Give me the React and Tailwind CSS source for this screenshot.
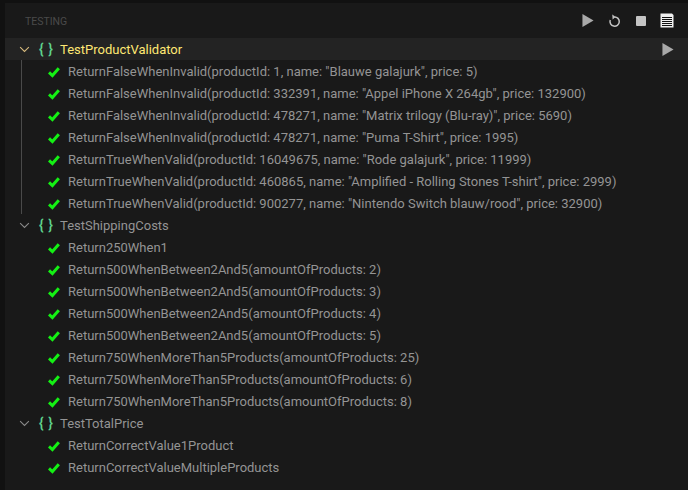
const suites = [
  {
    name: "TestProductValidator",
    active: true,
    tests: [
      'ReturnFalseWhenInvalid(productId: 1, name: "Blauwe galajurk", price: 5)',
      'ReturnFalseWhenInvalid(productId: 332391, name: "Appel iPhone X 264gb", price: 132900)',
      'ReturnFalseWhenInvalid(productId: 478271, name: "Matrix trilogy (Blu-ray)", price: 5690)',
      'ReturnFalseWhenInvalid(productId: 478271, name: "Puma T-Shirt", price: 1995)',
      'ReturnTrueWhenValid(productId: 16049675, name: "Rode galajurk", price: 11999)',
      'ReturnTrueWhenValid(productId: 460865, name: "Amplified - Rolling Stones T-shirt", price: 2999)',
      'ReturnTrueWhenValid(productId: 900277, name: "Nintendo Switch blauw/rood", price: 32900)',
    ],
  },
  {
    name: "TestShippingCosts",
    tests: [
      "Return250When1",
      "Return500WhenBetween2And5(amountOfProducts: 2)",
      "Return500WhenBetween2And5(amountOfProducts: 3)",
      "Return500WhenBetween2And5(amountOfProducts: 4)",
      "Return500WhenBetween2And5(amountOfProducts: 5)",
      "Return750WhenMoreThan5Products(amountOfProducts: 25)",
      "Return750WhenMoreThan5Products(amountOfProducts: 6)",
      "Return750WhenMoreThan5Products(amountOfProducts: 8)",
    ],
  },
  {
    name: "TestTotalPrice",
    tests: ["ReturnCorrectValue1Product", "ReturnCorrectValueMultipleProducts"],
  },
];

const Play = ({ className }) => (
  <svg viewBox="0 0 12 14" className={className} fill="#a9a9a9">
    <path d="M0 0L12 7L0 14Z" />
  </svg>
);

const Check = () => (
  <svg viewBox="0 0 12 11" className="w-[12px] h-[11px] shrink-0 mt-[2px]">
    <path d="M1 5.4L4.4 8.6L10.8 1.2" fill="none" stroke="#14f014" strokeWidth="3" />
  </svg>
);

const Chevron = ({ active }) => (
  <svg viewBox="0 0 12 8" className="w-[11px] h-[7px] shrink-0">
    <path d="M1 1.2L6 6.2L11 1.2" fill="none" stroke={active ? "#d7ba7d" : "#8a8a8a"} strokeWidth="1.2" />
  </svg>
);

const Suite = ({ suite }) => (
  <div>
    <div className={`flex items-center h-[22px] pl-[14px] ${suite.active ? "bg-[#232323]" : ""}`}>
      <Chevron active={suite.active} />
      <span className="ml-[9px] w-[14px] flex justify-between text-[14px] font-semibold text-[#5fd38d]">
        <span>{"{"}</span>
        <span>{"}"}</span>
      </span>
      <span className={`ml-[7px] mt-[2px] ${suite.active ? "text-[#ffe873]" : "text-[#949494]"}`}>{suite.name}</span>
      {suite.active && <Play className="w-[12px] h-[13px] ml-auto mr-[14px]" />}
    </div>
    <div className={suite.active ? "border-l border-[#4a4a4a] ml-[16px]" : "ml-[17px]"}>
      {suite.tests.map((t, i) => (
        <div key={i} className="flex items-center h-[22px] pl-[26px]">
          <Check />
          <span className="ml-[8px] mt-[2px] whitespace-nowrap text-[#949494]">{t}</span>
        </div>
      ))}
    </div>
  </div>
);

export default function App() {
  return (
    <div className="w-[688px] h-[490px] bg-[#111111] pt-[3px] pl-[5px] overflow-hidden font-['Roboto','Open_Sans',sans-serif] text-[13px]">
      <div className="h-full bg-[#191919]">
        <div className="flex items-center h-[35px] pl-[20px] pr-[14px]">
          <span className="text-[10.5px] mt-[2px] text-[#4a4a4a]">TESTING</span>
          <div className="ml-auto flex items-center">
            <Play className="w-[12px] h-[13px]" />
            <svg viewBox="0 0 14 14" className="w-[13px] h-[14px] ml-[14px]" fill="none" stroke="#c4c4c4" strokeWidth="1.6">
              <path d="M7 2.6A5 5 0 1 1 2.4 6" />
              <path d="M4.6 0.4L7.8 2.6L5 5" fill="#c4c4c4" strokeWidth="0.6" />
            </svg>
            <div className="w-[10px] h-[10px] rounded-[1px] bg-[#c4c4c4] ml-[15px]" />
            <svg viewBox="0 0 14 15" className="w-[14px] h-[15px] ml-[14px]">
              <path d="M0.5 0.5H12L13.5 2V14.5H0.5Z" fill="#f0f0f0" />
              <path d="M2 4.5H12M2 6.5H12M2 8.5H12M2 10.5H12M2 12.5H12" stroke="#111" strokeWidth="1" />
            </svg>
          </div>
        </div>
        {suites.map((s) => (
          <Suite key={s.name} suite={s} />
        ))}
      </div>
    </div>
  );
}
